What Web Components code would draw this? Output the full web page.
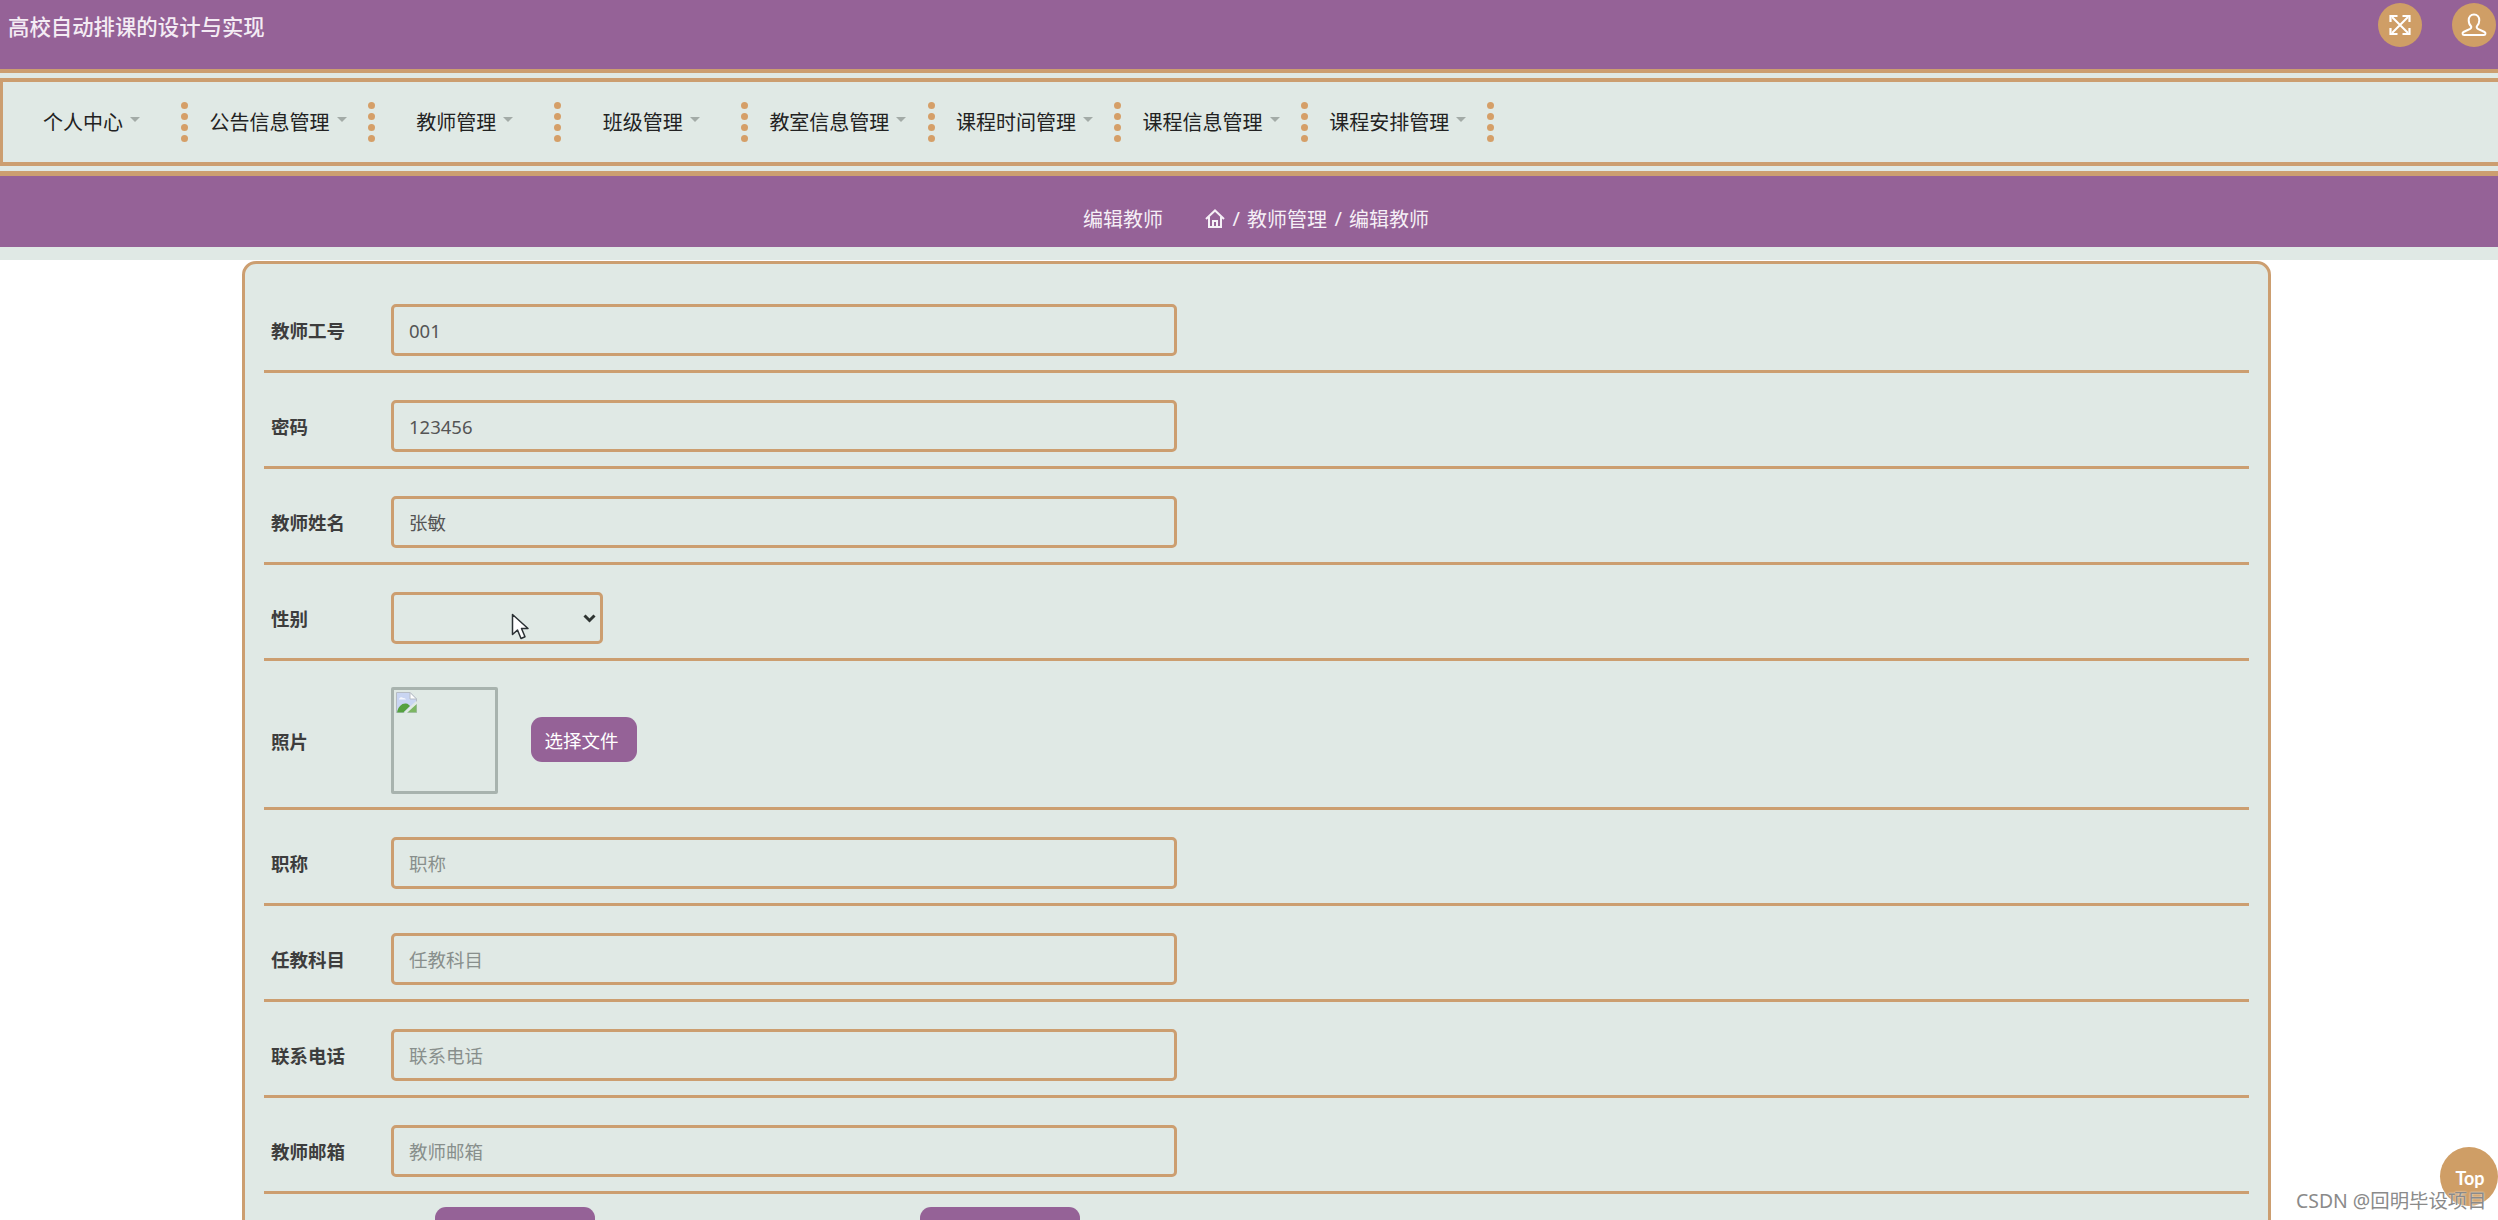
<!DOCTYPE html>
<html lang="zh">
<head>
<meta charset="utf-8">
<title>编辑教师</title>
<style>
    html, body { margin: 0; height: 100%; overflow: hidden; background: #fff; }
    body {
        position: relative;
        font-family: "Noto Sans", "Noto Sans CJK SC", sans-serif;
        --purple: #956297;
        --orange: #cc9e70;
        --light: #e0e9e5;
    }
</style>
</head>
<body>
<app-header title="高校自动排课的设计与实现"></app-header>
<nav-bar>
    <nav-item>个人中心</nav-item>
    <nav-item>公告信息管理</nav-item>
    <nav-item>教师管理</nav-item>
    <nav-item>班级管理</nav-item>
    <nav-item>教室信息管理</nav-item>
    <nav-item>课程时间管理</nav-item>
    <nav-item>课程信息管理</nav-item>
    <nav-item>课程安排管理</nav-item>
</nav-bar>
<bread-crumb title="编辑教师"></bread-crumb>
<form-card>
    <form-row label="教师工号"><text-field value="001" placeholder="教师工号"></text-field></form-row>
    <form-row label="密码"><text-field value="123456" placeholder="密码"></text-field></form-row>
    <form-row label="教师姓名"><text-field value="张敏" placeholder="教师姓名"></text-field></form-row>
    <form-row label="性别"><select-field></select-field></form-row>
    <form-row label="照片" photo><photo-field></photo-field></form-row>
    <form-row label="职称"><text-field placeholder="职称"></text-field></form-row>
    <form-row label="任教科目"><text-field placeholder="任教科目"></text-field></form-row>
    <form-row label="联系电话"><text-field placeholder="联系电话"></text-field></form-row>
    <form-row label="教师邮箱"><text-field placeholder="教师邮箱"></text-field></form-row>
    <form-actions></form-actions>
</form-card>
<mouse-pointer></mouse-pointer>
<top-button></top-button>
<water-mark>CSDN @回明毕设项目</water-mark>

<script>
class AppHeader extends HTMLElement {
    connectedCallback() {
        this.attachShadow({ mode: 'open' });
        this.shadowRoot.innerHTML = `
            <style>
                :host {
                    display: flex;
                    justify-content: space-between;
                    align-items: flex-start;
                    height: 69px;
                    background: var(--purple);
                    padding: 0 2px 0 8px;
                }
                .title { font-size: 21.400px; font-weight: 500; line-height: 54px; color: #f4ecf4; white-space: nowrap; }
                .icons { display: flex; gap: 30px; padding-top: 3px; }
                .circle {
                    width: 44px;
                    height: 44px;
                    border-radius: 50%;
                    background: #cf9e66;
                    display: flex;
                    align-items: center;
                    justify-content: center;
                }
                svg { fill: none; stroke: #fff; stroke-width: 2; }
            </style>
            <div class="title">${this.getAttribute('title')}</div>
            <div class="icons">
                <div class="circle">
                    <svg width="24" height="22" viewBox="0 0 24 22">
                        <path d="M4 3 20 19M20 3 4 19"/>
                        <path d="M2.5 8V2h7M14.500 2h7v6M21.500 14v6h-7M9.500 20h-7v-6" stroke-width="2.200"/>
                    </svg>
                </div>
                <div class="circle">
                    <svg width="26" height="24" viewBox="0 0 26 24">
                        <path d="M13 1.500c-3.300 0-5.300 2.500-5.300 5.800 0 2.600.9 4.700 2.400 6 .5.800.1 1.900-1 2.500L2.500 19c-1.500.8-1.200 3 .6 3h19.800c1.800 0 2.100-2.200.6-3l-6.600-3.200c-1.100-.6-1.500-1.700-1-2.500 1.500-1.300 2.400-3.400 2.400-6 0-3.300-2-5.800-5.300-5.800z"/>
                    </svg>
                </div>
            </div>
        `;
    }
}

class NavBar extends HTMLElement {
    connectedCallback() {
        this.attachShadow({ mode: 'open' });
        this.shadowRoot.innerHTML = `
            <style>
                :host {
                    display: block;
                    background: var(--light);
                    border-top: 4px solid var(--orange);
                    border-bottom: 5px solid var(--orange);
                    padding: 5px 0;
                }
                .inner {
                    display: flex;
                    align-items: center;
                    height: 80px;
                    padding-left: 1px;
                    border: solid var(--orange);
                    border-width: 4px 0 4px 3px;
                    margin: 0;
                }
            </style>
            <div class="inner"><slot></slot></div>
        `;
    }
}

class NavItem extends HTMLElement {
    connectedCallback() {
        this.attachShadow({ mode: 'open' });
        this.shadowRoot.innerHTML = `
            <style>
                :host { display: flex; align-items: center; width: 186.600px; flex: none; }
                .link {
                    width: 175px;
                    display: flex;
                    align-items: center;
                    justify-content: center;
                    gap: 7px;
                    font-size: 20px;
                    color: #222;
                    white-space: nowrap;
                }
                .caret {
                    width: 0;
                    height: 0;
                    border: 5px solid transparent;
                    border-top: 5px solid #a3aba7;
                    border-bottom: 0;
                    margin-top: -4px;
                }
                .dots { flex: 1; display: flex; flex-direction: column; align-items: center; gap: 4.300px; }
                .dots i { width: 7px; height: 7px; border-radius: 50%; background: #d59f68; }
            </style>
            <div class="link"><slot></slot><span class="caret"></span></div>
            <div class="dots"><i></i><i></i><i></i><i></i></div>
        `;
    }
}

class BreadCrumb extends HTMLElement {
    connectedCallback() {
        this.attachShadow({ mode: 'open' });
        const title = this.getAttribute('title');
        this.shadowRoot.innerHTML = `
            <style>
                :host {
                    display: block;
                    background: var(--purple);
                    border-bottom: 13px solid var(--light);
                    color: #f5eff6;
                    font-size: 20px;
                }
                .wrap {
                    box-sizing: border-box;
                    height: 71px;
                    display: flex;
                    align-items: center;
                    padding: 13px 0 0 1083px;
                    white-space: nowrap;
                }
                .path { display: flex; align-items: center; margin-left: 42px; }
                .sep { margin: 0 7px 0 7.500px; }
                svg { fill: none; stroke: #f5eff6; stroke-width: 2; }
            </style>
            <div class="wrap">
                <span>${title}</span>
                <span class="path">
                    <svg width="20" height="19" viewBox="0 0 20 19">
                        <path d="M1 10 10 1.500 19 10"/>
                        <path d="M4 8v10h12V8"/>
                        <path d="M8 18v-6h4v6"/>
                    </svg>
                    <span class="sep">/</span><span>教师管理</span><span class="sep">/</span><span>${title}</span>
                </span>
            </div>
        `;
    }
}

class FormCard extends HTMLElement {
    connectedCallback() {
        this.attachShadow({ mode: 'open' });
        this.shadowRoot.innerHTML = `
            <style>
                :host {
                    display: block;
                    box-sizing: border-box;
                    width: 2029px;
                    margin: 1px 0 0 242px;
                    padding: 13px 19px 30px;
                    background: var(--light);
                    border: 3px solid var(--orange);
                    border-radius: 14px;
                }
            </style>
            <slot></slot>
        `;
    }
}

class FormRow extends HTMLElement {
    connectedCallback() {
        this.attachShadow({ mode: 'open' });
        this.shadowRoot.innerHTML = `
            <style>
                :host {
                    display: flex;
                    align-items: center;
                    padding: 27px 0 14px;
                    border-bottom: 3px solid var(--orange);
                }
                :host([photo]) { padding: 26px 0 13px; }
                label {
                    width: 120px;
                    margin-left: 7px;
                    font-size: 18.500px;
                    font-weight: 700;
                    color: #3d3d3d;
                    white-space: nowrap;
                }
            </style>
            <label>${this.getAttribute('label')}</label>
            <slot></slot>
        `;
    }
}

class TextField extends HTMLElement {
    connectedCallback() {
        this.attachShadow({ mode: 'open' });
        const value = this.getAttribute('value') || '';
        const placeholder = this.getAttribute('placeholder') || '';
        this.shadowRoot.innerHTML = `
            <style>
                :host { display: block; }
                input {
                    display: block;
                    box-sizing: border-box;
                    width: 786px;
                    height: 52px;
                    padding: 0 15px;
                    margin: 0;
                    background: transparent;
                    border: 3px solid var(--orange);
                    border-radius: 5px;
                    outline: none;
                    font: 18.500px "Noto Sans", "Noto Sans CJK SC", sans-serif;
                    color: #555;
                }
                input::placeholder { color: #888f8c; opacity: 1; }
            </style>
            <input type="text" value="${value}" placeholder="${placeholder}">
        `;
    }
}

class SelectField extends HTMLElement {
    connectedCallback() {
        this.attachShadow({ mode: 'open' });
        this.shadowRoot.innerHTML = `
            <style>
                :host { display: block; position: relative; }
                select {
                    display: block;
                    box-sizing: border-box;
                    width: 212px;
                    height: 52px;
                    margin: 0;
                    appearance: none;
                    background: transparent;
                    border: 3px solid var(--orange);
                    border-radius: 5px;
                    outline: none;
                    color: #222;
                    font: 18.500px "Noto Sans", "Noto Sans CJK SC", sans-serif;
                }
                svg { position: absolute; left: 192px; top: 22px; fill: none; stroke: #2f3432; stroke-width: 3; }
            </style>
            <select><option></option></select>
            <svg width="13" height="9" viewBox="0 0 13 9"><path d="M1.500 1.500 6.500 6.500 11.500 1.500"/></svg>
        `;
    }
}

class PhotoField extends HTMLElement {
    connectedCallback() {
        this.attachShadow({ mode: 'open' });
        this.shadowRoot.innerHTML = `
            <style>
                :host { display: flex; align-items: center; gap: 33px; }
                .photo {
                    box-sizing: border-box;
                    width: 107px;
                    height: 107px;
                    padding: 2px;
                    border: 3px solid #a8b3ae;
                    border-radius: 2px;
                }
                svg { display: block; }
                button {
                    width: 106px;
                    height: 45px;
                    margin: 0 0 2px;
                    padding: 0 5px 0 0;
                    border: 0;
                    border-radius: 11px;
                    background: var(--purple);
                    color: #fff;
                    font: 18.500px "Noto Sans", "Noto Sans CJK SC", sans-serif;
                }
            </style>
            <div class="photo">
                <svg width="21" height="21" viewBox="0 0 21 21">
                    <path d="M.5.500H14L20.500 7v14H.5z" fill="#c9d5f2" stroke="#b6bcc4"/>
                    <path d="M3 7c1-2 3-2 4-1 2-.5 3 1 3 1.500H3z" fill="#f4f6fc"/>
                    <path d="M14 .5V7h6.500z" fill="#fff" stroke="#b6bcc4"/>
                    <path d="M1 20.500c1-6 5-9.500 9-9 2 .3 3 1.300 4 2.500l-6.500 6.500z" fill="#55a13f"/>
                    <path d="M16 15l4.500-3v8.500H11z" fill="#7cb662"/>
                    <path d="M9 21 21 10" stroke="#e0e9e5" stroke-width="2.500"/>
                </svg>
            </div>
            <button type="button">选择文件</button>
        `;
    }
}

class FormActions extends HTMLElement {
    connectedCallback() {
        this.attachShadow({ mode: 'open' });
        this.shadowRoot.innerHTML = `
            <style>
                :host { display: flex; gap: 325px; padding: 13px 0 0 171px; }
                i {
                    display: block;
                    width: 160px;
                    height: 46px;
                    border-radius: 11px;
                    background: var(--purple);
                }
            </style>
            <i></i><i></i>
        `;
    }
}

class MousePointer extends HTMLElement {
    connectedCallback() {
        this.attachShadow({ mode: 'open' });
        this.shadowRoot.innerHTML = `
            <style>
                :host { position: absolute; left: 511px; top: 613px; width: 18px; height: 28px; }
                svg { display: block; }
            </style>
            <svg width="18" height="28" viewBox="0 0 18 28">
                <path d="M1.500 1.500v20l5-4.500 3.500 8.500 4-1.700-3.500-8.300h6.500z" fill="#fff" stroke="#2b3134" stroke-width="1.500" stroke-linejoin="round"/>
            </svg>
        `;
    }
}

class TopButton extends HTMLElement {
    connectedCallback() {
        this.attachShadow({ mode: 'open' });
        this.shadowRoot.innerHTML = `
            <style>
                :host {
                    position: absolute;
                    left: 2440px;
                    top: 1147px;
                    width: 58px;
                    height: 59px;
                    border-radius: 50%;
                    background: #cf9e66;
                    color: #fff;
                    font: 700 18px Lato, sans-serif;
                    display: flex;
                    align-items: center;
                    justify-content: center;
                    padding-left: 2px;
                    padding-top: 2px;
                    box-sizing: border-box;
                }
            </style>
            Top
        `;
    }
}

class WaterMark extends HTMLElement {
    connectedCallback() {
        this.attachShadow({ mode: 'open' });
        this.shadowRoot.innerHTML = `
            <style>
                :host {
                    position: absolute;
                    left: 2296px;
                    top: 1188px;
                    font-size: 19.400px;
                    line-height: 26px;
                    color: #8a8a8a;
                    white-space: nowrap;
                    text-shadow: 0 0 2px #fff;
                }
            </style>
            <slot></slot>
        `;
    }
}

customElements.define('app-header', AppHeader);
customElements.define('nav-bar', NavBar);
customElements.define('nav-item', NavItem);
customElements.define('bread-crumb', BreadCrumb);
customElements.define('form-card', FormCard);
customElements.define('form-row', FormRow);
customElements.define('text-field', TextField);
customElements.define('select-field', SelectField);
customElements.define('photo-field', PhotoField);
customElements.define('form-actions', FormActions);
customElements.define('mouse-pointer', MousePointer);
customElements.define('top-button', TopButton);
customElements.define('water-mark', WaterMark);
</script>
</body>
</html>
